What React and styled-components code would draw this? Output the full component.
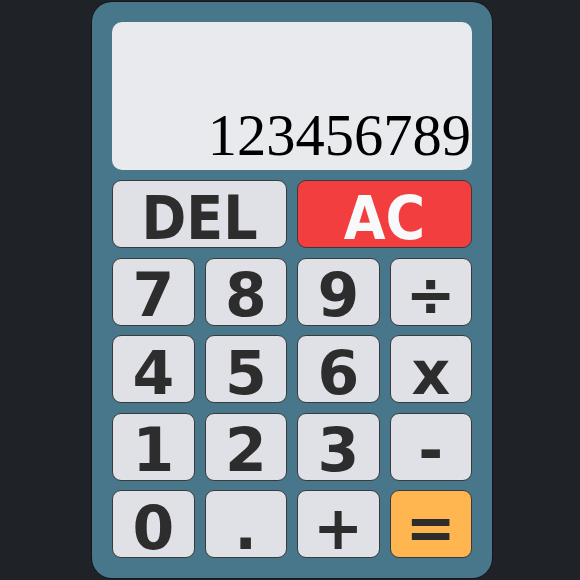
import React from "react";
import styled, { createGlobalStyle } from "styled-components";

const Global = createGlobalStyle`
  html, body { margin: 0; padding: 0; background: #1f2328; }
  body { width: 580px; height: 580px; overflow: hidden; }
  * { box-sizing: border-box; }
`;

const Page = styled.div`
  width: 580px;
  height: 580px;
  display: flex;
  justify-content: center;
  align-items: center;
`;

const Calculator = styled.div`
  width: 400px;
  height: 576px;
  margin-left: 4px;
  background: #48778c;
  border-radius: 20px;
  box-shadow: 0 0 0 1px #151719;
  padding: 20px;
  display: flex;
  flex-direction: column;
  gap: 10px;
`;

const Screen = styled.div`
  flex: none;
  height: 148px;
  background: #e9eaee;
  border-radius: 10px;
  display: flex;
  align-items: flex-end;
  justify-content: flex-end;
  font-family: "Liberation Serif", "Times New Roman", serif;
  font-size: 58.5px;
  color: #000;
  line-height: 1;
  padding: 0 1px 5px 0;
  white-space: nowrap;
`;

const Keys = styled.div`
  flex: 1;
  min-height: 0;
  display: grid;
  grid-template-columns: repeat(4, minmax(0, 1fr));
  grid-template-rows: repeat(5, minmax(0, 1fr));
  gap: 9.5px 10px;
`;

const Key = styled.button`
  grid-column: span ${(p) => p.$span || 1};
  min-height: 0;
  background: ${(p) => p.$bg || "#dfe1e6"};
  color: ${(p) => p.$fg || "#2d2d2d"};
  border: 1px solid #3a3a3a;
  border-radius: 9px;
  font-family: ${(p) =>
    p.$word
      ? `"DejaVu Sans Condensed", "DejaVu Sans", sans-serif`
      : `"DejaVu Sans", Verdana, sans-serif`};
  font-stretch: ${(p) => (p.$word ? "condensed" : "normal")};
  font-weight: bold;
  font-size: 60px;
  line-height: 1;
  padding: 7px 0 0 0;
  display: flex;
  align-items: center;
  justify-content: center;
  cursor: pointer;
`;

const keys = [
  { l: "DEL", span: 2, word: true },
  { l: "AC", span: 2, word: true, bg: "#f23e3e", fg: "#f8f9fb" },
  { l: "7" }, { l: "8" }, { l: "9" }, { l: "÷" },
  { l: "4" }, { l: "5" }, { l: "6" }, { l: "x" },
  { l: "1" }, { l: "2" }, { l: "3" }, { l: "-" },
  { l: "0" }, { l: "." }, { l: "+" }, { l: "=", bg: "#ffb550" },
];

export default function App() {
  return (
    <>
      <Global />
      <Page>
        <Calculator>
          <Screen>123456789</Screen>
          <Keys>
            {keys.map((k, i) => (
              <Key key={i} $span={k.span} $word={k.word} $bg={k.bg} $fg={k.fg}>
                {k.l}
              </Key>
            ))}
          </Keys>
        </Calculator>
      </Page>
    </>
  );
}
